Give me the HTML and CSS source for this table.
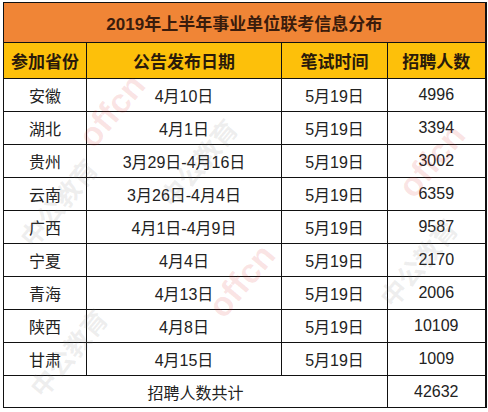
FILE: index.html
```html
<!DOCTYPE html>
<html lang="zh-CN">
<head>
  <meta charset="UTF-8">
  <meta name="viewport" content="width=device-width, initial-scale=1.0">
  <title>2019年上半年事业单位联考信息分布</title>
  <link rel="stylesheet" href="styles.css">
</head>
<body>
  <div class="sheet">
    <table class="exam-table">
      <colgroup>
        <col class="col-prov">
        <col class="col-date">
        <col class="col-test">
        <col class="col-num">
      </colgroup>
      <thead>
        <tr class="title-row">
          <th colspan="4">2019年上半年事业单位联考信息分布</th>
        </tr>
        <tr class="head-row">
          <th>参加省份</th>
          <th>公告发布日期</th>
          <th>笔试时间</th>
          <th>招聘人数</th>
        </tr>
      </thead>
      <tbody>
        <tr><td>安徽</td><td>4月10日</td><td>5月19日</td><td>4996</td></tr>
        <tr><td>湖北</td><td>4月1日</td><td>5月19日</td><td>3394</td></tr>
        <tr><td>贵州</td><td>3月29日-4月16日</td><td>5月19日</td><td>3002</td></tr>
        <tr><td>云南</td><td>3月26日-4月4日</td><td>5月19日</td><td>6359</td></tr>
        <tr><td>广西</td><td>4月1日-4月9日</td><td>5月19日</td><td>9587</td></tr>
        <tr><td>宁夏</td><td>4月4日</td><td>5月19日</td><td>2170</td></tr>
        <tr><td>青海</td><td>4月13日</td><td>5月19日</td><td>2006</td></tr>
        <tr><td>陕西</td><td>4月8日</td><td>5月19日</td><td>10109</td></tr>
        <tr><td>甘肃</td><td>4月15日</td><td>5月19日</td><td>1009</td></tr>
        <tr class="total-row"><td colspan="3">招聘人数共计</td><td>42632</td></tr>
      </tbody>
    </table>

    <!-- watermarks -->
    <span class="mark mark-en" style="left:70px;top:130px">offcn</span>
    <span class="mark mark-en" style="left:200px;top:300px">offcn</span>
    <span class="mark mark-en" style="left:390px;top:180px">offcn</span>
    <span class="mark mark-cn" style="left:10px;top:230px">中公教育</span>
    <span class="mark mark-cn" style="left:150px;top:190px">中公教育</span>
    <span class="mark mark-cn" style="left:370px;top:290px">中公教育</span>
    <span class="mark mark-cn" style="left:20px;top:380px">中公教育</span>
  </div>
</body>
</html>
```

FILE: styles.css
```css
/* General Styles */
body {
  margin: 0;
  background: #fff;
  font-family: "Liberation Sans", "Noto Sans CJK SC", sans-serif;
}

.sheet {
  position: relative;
  padding: 2px 3px 0 3px;
  overflow: hidden;
  height: 410px;
}

.exam-table {
  width: 482px;
  border-collapse: collapse;
  table-layout: fixed;
}

.col-prov { width: 83px; }
.col-date { width: 195px; }
.col-test { width: 106px; }
.col-num { width: 98px; }

.exam-table th,
.exam-table td {
  border: 1px solid #111;
  text-align: center;
  padding: 0;
}

.exam-table td {
  height: 32px;
  font-size: 16px;
  color: #222;
}

.exam-table td:last-child,
.exam-table th:last-child {
  border-right: 2px solid #111;
}

.title-row th {
  height: 39px;
  background: #f08536;
  color: #3a1c0c;
  font-size: 17px;
  font-weight: bold;
}

.head-row th {
  height: 35px;
  background: #fdc00a;
  color: #2a1a0a;
  font-size: 17px;
  font-weight: bold;
}

.total-row td {
  height: 31px;
}

.mark {
  position: absolute;
  pointer-events: none;
  white-space: nowrap;
  transform: rotate(-50deg);
  transform-origin: left top;
}

.mark-en {
  color: rgba(220, 40, 40, 0.13);
  font-size: 34px;
  font-weight: bold;
  font-family: "Liberation Sans", sans-serif;
}

.mark-cn {
  color: rgba(120, 120, 120, 0.13);
  font-size: 26px;
  font-weight: bold;
  font-family: "Noto Sans CJK SC", sans-serif;
}
```
